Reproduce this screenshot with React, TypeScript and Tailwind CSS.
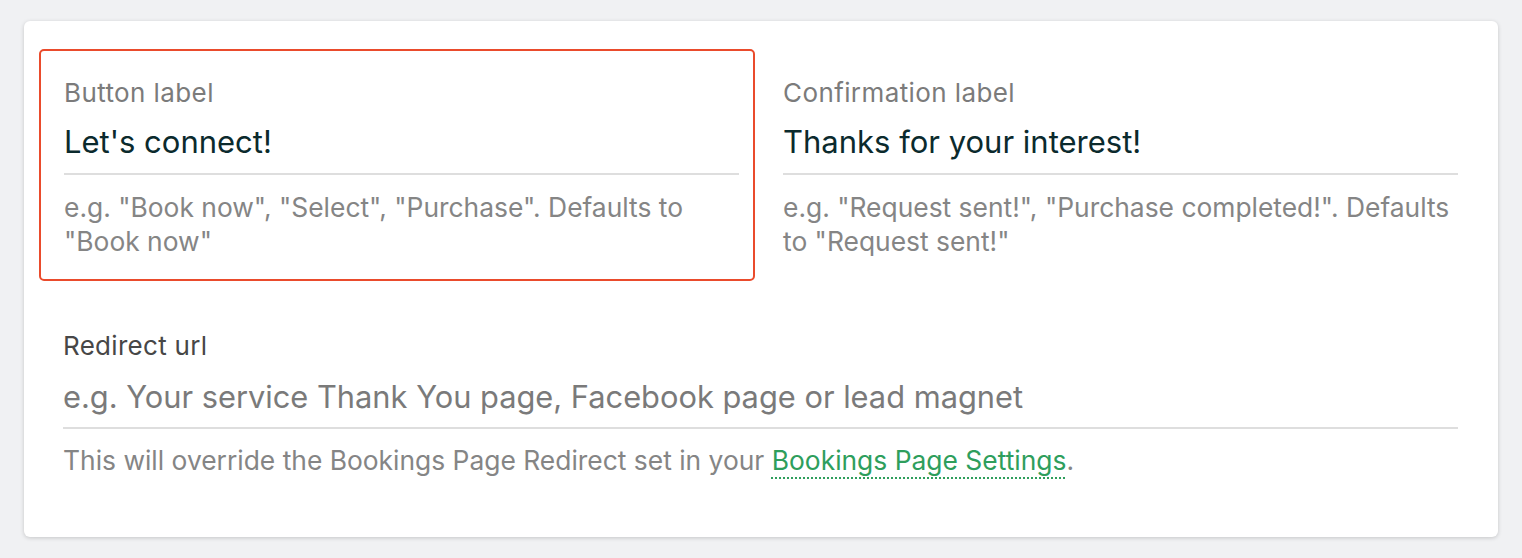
export default function App() {
  return (
    <div
      className="min-h-screen bg-[#f0f1f3] pt-[21px] px-[24px]"
      style={{ fontFamily: 'Inter, "Noto Sans", sans-serif' }}
    >
      <div className="w-[1474px] h-[516px] rounded-md bg-white shadow-[0_1px_4px_rgba(0,0,0,0.18)] pt-[28px] pl-[15px] pr-[40px]">
        {/* top row */}
        <div className="flex">
          <div className="w-[716px] h-[232px] rounded-[5px] border-2 border-[#ea4b2c] pt-[26px] pl-[23px] pr-[14px]">
            <Field
              label="Button label"
              value="Let's connect!"
              hint={'e.g. "Book now", "Select", "Purchase". Defaults to "Book now"'}
            />
          </div>
          <div className="ml-[28px] w-[675px] pt-[28px]">
            <Field
              label="Confirmation label"
              value="Thanks for your interest!"
              hint={'e.g. "Request sent!", "Purchase completed!". Defaults to "Request sent!"'}
            />
          </div>
        </div>

        {/* redirect url */}
        <div className="ml-[24px] mt-[49px]">
          <div className="text-[26px] leading-[32px] tracking-[0.3px] text-[#474747]">Redirect url</div>
          <div className="mt-[15px] text-[30.8px] leading-[40px] text-[#7a7a7a] pb-[10px] border-b-2 border-[#dedede]">
            e.g. Your service Thank You page, Facebook page or lead magnet
          </div>
          <div className="mt-[14px] text-[26.4px] leading-[34px] text-[#858585]">
            This will override the Bookings Page Redirect set in your{' '}
            <a className="text-[#2e9e5c] underline decoration-dotted decoration-2 underline-offset-[7px]">
              Bookings Page Settings
            </a>
            .
          </div>
        </div>
      </div>
    </div>
  )
}

function Field({ label, value, hint }: { label: string; value: string; hint: string }) {
  return (
    <div>
      <div className="text-[26px] leading-[32px] tracking-[0.4px] text-[#7b7b7b]">{label}</div>
      <div className="mt-[13px] text-[31px] leading-[40px] text-[#0b2a2d] pb-[11px] border-b-2 border-[#dedede]">
        {value}
      </div>
      <div className="mt-[15px] text-[26.4px] leading-[34px] text-[#858585]">{hint}</div>
    </div>
  )
}
